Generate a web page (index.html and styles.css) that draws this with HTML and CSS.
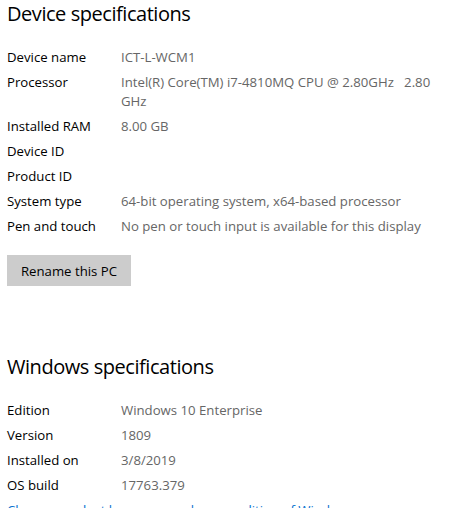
FILE: index.html
```html
<!DOCTYPE html>
<html lang="en">
<head>
<meta charset="utf-8">
<title>About</title>
<link rel="stylesheet" href="styles.css">
</head>
<body>
<main class="page">
  <section class="section">
    <h2 class="heading">Device specifications</h2>
    <dl class="specs">
      <dt>Device name</dt><dd>ICT-L-WCM1</dd>
      <dt>Processor</dt><dd>Intel(R) Core(TM) i7-4810MQ CPU @ 2.80GHz&nbsp;&nbsp;&nbsp;2.80 GHz</dd>
      <dt>Installed RAM</dt><dd>8.00 GB</dd>
      <dt>Device ID</dt><dd></dd>
      <dt>Product ID</dt><dd></dd>
      <dt>System type</dt><dd>64-bit operating system, x64-based processor</dd>
      <dt>Pen and touch</dt><dd>No pen or touch input is available for this display</dd>
    </dl>
    <button class="btn" type="button">Rename this PC</button>
  </section>
  <section class="section section-win">
    <h2 class="heading">Windows specifications</h2>
    <dl class="specs">
      <dt>Edition</dt><dd>Windows 10 Enterprise</dd>
      <dt>Version</dt><dd>1809</dd>
      <dt>Installed on</dt><dd>3/8/2019</dd>
      <dt>OS build</dt><dd>17763.379</dd>
    </dl>
    <a class="link" href="#">Change product key or upgrade your edition of Windows</a>
  </section>
</main>
</body>
</html>
```

FILE: styles.css
```css
html, body {
  margin: 0;
  padding: 0;
  background: #ffffff;
}
body {
  font-family: "Open Sans", "Noto Sans", sans-serif;
  font-size: 13.2px;
  color: #000;
  overflow: hidden;
  height: 508px;
}
.page {
  padding: 0 7px;
}
.heading {
  margin: 0;
  font-size: 20px;
  font-weight: 400;
  line-height: 28px;
  letter-spacing: -0.45px;
  color: #000;
}
.specs {
  margin: 20px 0 0;
  display: grid;
  grid-template-columns: 114px 1fr;
  row-gap: 6px;
  line-height: 19px;
  max-width: 445px;
}
.specs dt, .specs dd {
  margin: 0;
}
.specs dd {
  color: #666;
  min-height: 19px;
}
.btn {
  display: block;
  margin-top: 19px;
  height: 31px;
  width: 124px;
  padding: 0;
  border: 0;
  background: #cccccc;
  color: #000;
  font-family: inherit;
  font-size: 13.2px;
}
.section-win {
  margin-top: 67px;
}
.link {
  display: block;
  margin-top: 6px;
  line-height: 19px;
  color: #0a73cf;
  text-decoration: none;
}
```
